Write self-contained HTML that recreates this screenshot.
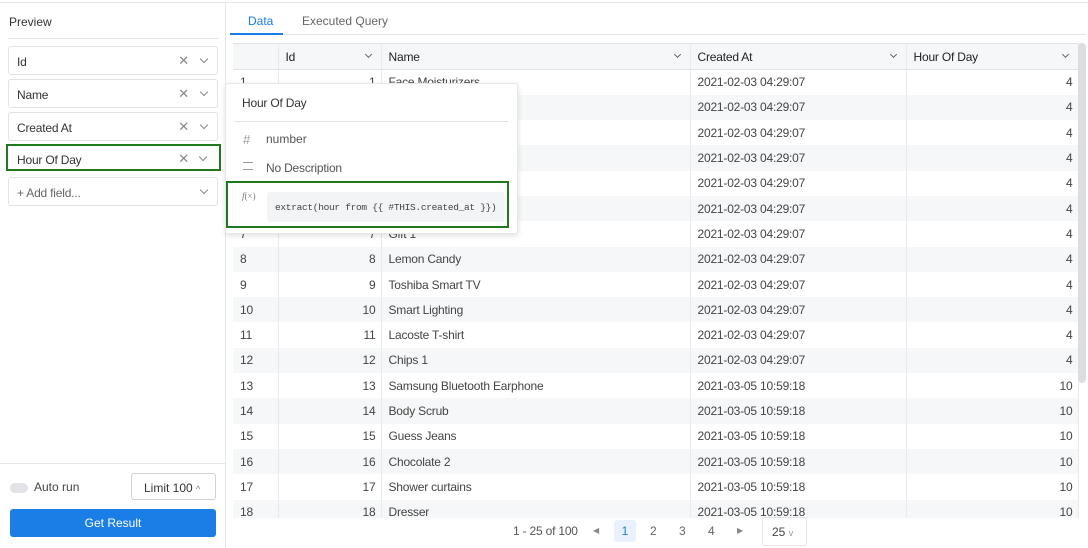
<!DOCTYPE html>
<html><head><meta charset="utf-8"><style>
*{box-sizing:border-box;margin:0;padding:0}
body{width:1088px;height:548px;overflow:hidden;background:#fff;font-family:"Liberation Sans",sans-serif;font-size:12px;color:#333;position:relative}
.abs{position:absolute}
.left{left:0;top:2px;width:226px;height:546px;border-right:1px solid #e6e7e9;border-top:1px solid #e6e7e9}
.field{position:absolute;left:8px;width:210px;height:29px;border:1px solid #e2e3e6;border-radius:3px;padding:8px 8px;font-size:12px;color:#333;letter-spacing:-0.2px}
.field .x{position:absolute;right:28px;top:6px;color:#888;font-size:13px}
.field .v{position:absolute;right:10px;top:9px;width:6px;height:6px;border-right:1px solid #888;border-bottom:1px solid #888;transform:rotate(45deg)}
table{border-collapse:collapse;position:absolute;left:233px;top:43px;width:845px;table-layout:fixed;letter-spacing:-0.2px}
td,th{height:25.3px;font-size:12px;padding:0 7px;border-right:1px solid #e9eaec;white-space:nowrap;overflow:hidden;color:#444;font-weight:normal}
td.r{padding-right:5px}
th{height:26px;background:#f6f7f8;text-align:left;color:#222;border-bottom:1px solid #e2e3e6;border-top:1px solid #e2e3e6;position:relative}
th .v{position:absolute;right:10px;top:8px;width:5px;height:5px;border-right:1px solid #666;border-bottom:1px solid #666;transform:rotate(45deg)}
tr:nth-child(odd) td{background:#f6f7f8}
td.r{text-align:right}
</style></head><body>
<div class="abs left">
<div class="abs" style="left:9px;top:12px;font-size:12px;color:#333">Preview</div>
<div class="abs" style="left:8px;top:35px;width:210px;border-top:1px solid #e2e3e6"></div>
<div class="field" style="top:43px">Id<span class="x">✕</span><span class="v"></span></div>
<div class="field" style="top:76px">Name<span class="x">✕</span><span class="v"></span></div>
<div class="field" style="top:109px">Created At<span class="x">✕</span><span class="v"></span></div>
<div class="field" style="top:141px;left:6px;width:215px;height:27px;border:2px solid #1f7a1f;border-radius:0;padding:7px 9px">Hour Of Day<span class="x" style="right:30px;top:5px">✕</span><span class="v" style="right:13px;top:8px"></span></div>
<div class="field" style="top:174px;color:#666">+ Add field...<span class="v"></span></div>
<div class="abs" style="left:0;top:460px;width:226px;border-top:1px solid #e6e7e9"></div>
<div class="abs" style="left:10px;top:480px;width:18px;height:10px;border-radius:5px;background:#e2e3e6"></div>
<div class="abs" style="left:34px;top:477px;color:#444">Auto run</div>
<div class="abs" style="left:131px;top:470px;width:85px;height:27px;border:1px solid #d0d2d6;border-radius:3px;padding:7px 0 0 12px;color:#333">Limit 100 <span style="font-size:9px;color:#777">^</span></div>
<div class="abs" style="left:10px;top:506px;width:206px;height:28px;background:#1a7ee6;border-radius:3px;color:#fff;text-align:center;line-height:28px;font-size:12px">Get Result</div>
</div>
<div class="abs" style="left:226px;top:2px;width:862px;border-top:1px solid #e6e7e9"></div>
<div class="abs" style="left:248px;top:14px;color:#1a7ee6">Data</div>
<div class="abs" style="left:302px;top:14px;color:#666">Executed Query</div>
<div class="abs" style="left:230px;top:34px;width:856px;border-top:1px solid #e6e7e9"></div>
<div class="abs" style="left:230px;top:33px;width:53px;border-top:2px solid #1a7ee6"></div>
<table>
<colgroup><col style="width:45px"><col style="width:103px"><col style="width:309px"><col style="width:216px"><col style="width:172px"></colgroup>
<tr><th></th><th>Id<span class="v"></span></th><th>Name<span class="v"></span></th><th>Created At<span class="v"></span></th><th>Hour Of Day<span class="v"></span></th></tr>
<tr><td>1</td><td class="r">1</td><td>Face Moisturizers</td><td>2021-02-03 04:29:07</td><td class="r">4</td></tr>
<tr><td>2</td><td class="r">2</td><td>Hand Cream</td><td>2021-02-03 04:29:07</td><td class="r">4</td></tr>
<tr><td>3</td><td class="r">3</td><td>Lipstick</td><td>2021-02-03 04:29:07</td><td class="r">4</td></tr>
<tr><td>4</td><td class="r">4</td><td>Shampoo</td><td>2021-02-03 04:29:07</td><td class="r">4</td></tr>
<tr><td>5</td><td class="r">5</td><td>Toothpaste</td><td>2021-02-03 04:29:07</td><td class="r">4</td></tr>
<tr><td>6</td><td class="r">6</td><td>Perfume</td><td>2021-02-03 04:29:07</td><td class="r">4</td></tr>
<tr><td>7</td><td class="r">7</td><td>Gift 1</td><td>2021-02-03 04:29:07</td><td class="r">4</td></tr>
<tr><td>8</td><td class="r">8</td><td>Lemon Candy</td><td>2021-02-03 04:29:07</td><td class="r">4</td></tr>
<tr><td>9</td><td class="r">9</td><td>Toshiba Smart TV</td><td>2021-02-03 04:29:07</td><td class="r">4</td></tr>
<tr><td>10</td><td class="r">10</td><td>Smart Lighting</td><td>2021-02-03 04:29:07</td><td class="r">4</td></tr>
<tr><td>11</td><td class="r">11</td><td>Lacoste T-shirt</td><td>2021-02-03 04:29:07</td><td class="r">4</td></tr>
<tr><td>12</td><td class="r">12</td><td>Chips 1</td><td>2021-02-03 04:29:07</td><td class="r">4</td></tr>
<tr><td>13</td><td class="r">13</td><td>Samsung Bluetooth Earphone</td><td>2021-03-05 10:59:18</td><td class="r">10</td></tr>
<tr><td>14</td><td class="r">14</td><td>Body Scrub</td><td>2021-03-05 10:59:18</td><td class="r">10</td></tr>
<tr><td>15</td><td class="r">15</td><td>Guess Jeans</td><td>2021-03-05 10:59:18</td><td class="r">10</td></tr>
<tr><td>16</td><td class="r">16</td><td>Chocolate 2</td><td>2021-03-05 10:59:18</td><td class="r">10</td></tr>
<tr><td>17</td><td class="r">17</td><td>Shower curtains</td><td>2021-03-05 10:59:18</td><td class="r">10</td></tr>
<tr><td>18</td><td class="r">18</td><td>Dresser</td><td>2021-03-05 10:59:18</td><td class="r">10</td></tr>
</table>
<div class="abs" style="left:226px;top:518px;width:862px;height:30px;background:#fff"></div>
<div class="abs" style="left:1078px;top:43px;width:8px;height:340px;background:#dcdde0;border-radius:4px"></div>
<div class="abs" style="left:513px;top:524px;color:#555;letter-spacing:-0.2px">1 - 25 of 100</div>
<div class="abs" style="left:593px;top:524px;color:#888;font-size:8px;line-height:14px">◀</div>
<div class="abs" style="left:614px;top:520px;width:22px;height:22px;background:#e8f1fc;border-radius:3px;color:#1a7ee6;text-align:center;line-height:22px">1</div>
<div class="abs" style="left:650px;top:524px;color:#666">2</div>
<div class="abs" style="left:679px;top:524px;color:#666">3</div>
<div class="abs" style="left:708px;top:524px;color:#666">4</div>
<div class="abs" style="left:737px;top:524px;color:#888;font-size:8px;line-height:14px">▶</div>
<div class="abs" style="left:762px;top:517px;width:45px;height:29px;border:1px solid #e2e3e6;border-radius:3px;padding:7px 0 0 9px;color:#444">25 <span style="color:#999;font-size:9px">v</span></div>
<div class="abs" style="left:225px;top:83px;width:293px;height:151px;background:#fff;border:1px solid #e6e7e9;border-radius:3px;box-shadow:0 2px 6px rgba(0,0,0,.12)">
<div class="abs" style="left:16px;top:12px;color:#333;letter-spacing:-0.2px">Hour Of Day</div>
<div class="abs" style="left:8px;top:37px;width:274px;border-top:1px solid #e2e3e6"></div>
<div class="abs" style="left:17px;top:48px;color:#999;font-size:13px">#</div>
<div class="abs" style="left:40px;top:48px;color:#555">number</div>
<div class="abs" style="left:17px;top:78px;width:10px;border-top:1px solid #999;height:8px;border-bottom:1px solid #999"></div>
<div class="abs" style="left:40px;top:77px;color:#555;letter-spacing:-0.2px">No Description</div>
<div class="abs" style="left:0;top:97px;width:283px;height:47px;border:2px solid #1f7a1f"></div>
<div class="abs" style="left:16px;top:107px;color:#777;font-size:9px;font-family:'Liberation Serif',serif"><i>f</i>(×)</div>
<div class="abs" style="left:41px;top:108px;width:238px;height:30px;background:#f3f4f6;border-radius:3px;font-family:'Liberation Mono',monospace;font-size:9.5px;letter-spacing:-0.3px;color:#444;padding:10px 0 0 8px;white-space:nowrap">extract(hour from {{ #THIS.created_at }})</div>
</div>
</body></html>
